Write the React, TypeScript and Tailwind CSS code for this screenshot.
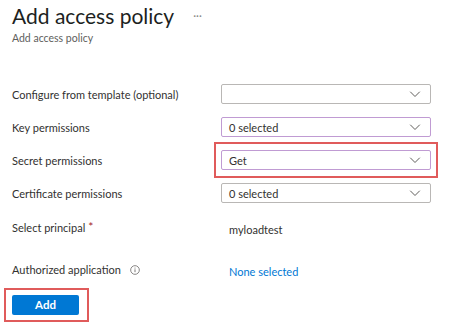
import React from 'react';

const Chevron = () => (
  <svg width="12" height="12" viewBox="0 0 12 12" fill="none" className="shrink-0">
    <path d="M1.5 4l4.5 4.5L10.5 4" stroke="#605e5c" strokeWidth="1" strokeLinecap="round" strokeLinejoin="round" />
  </svg>
);

const Dropdown = ({ value, border }: { value?: string; border: string }) => (
  <div className={`h-[20px] w-[210px] flex items-center justify-between pl-[7px] pr-[9px] border rounded-[2px] bg-white ${border}`}>
    <span className="text-[11px] text-[#323130] leading-none">{value}</span>
    <Chevron />
  </div>
);

const Label = ({ children }: { children: React.ReactNode }) => (
  <div className="text-[11px] text-[#323130] leading-none flex items-center gap-[3px]">{children}</div>
);

export default function App() {
  return (
    <div className="w-[474px] h-[331px] bg-white overflow-hidden pl-[12px] pt-[1px]" style={{ fontFamily: 'Lato, "Open Sans", sans-serif' }}>
      <div className="flex items-center gap-[19px]">
        <h1 className="text-[21px] leading-[30px] text-[#201f1e]">Add access policy</h1>
        <span className="text-[#8a8886] text-[11px] leading-none pb-[2px]">···</span>
      </div>
      <div className="text-[10.5px] text-[#605e5c] leading-[12px] mt-[1px]">Add access policy</div>

      <div className="mt-[40px] flex flex-col gap-[13px]">
        <div className="flex items-center h-[20px]">
          <div className="w-[209px]"><Label>Configure from template (optional)</Label></div>
          <Dropdown border="border-[#b9b7b5]" />
        </div>
        <div className="flex items-center h-[20px]">
          <div className="w-[209px]"><Label>Key permissions</Label></div>
          <Dropdown value="0 selected" border="border-[#c09bd3]" />
        </div>
        <div className="flex items-center h-[20px]">
          <div className="w-[209px]"><Label>Secret permissions</Label></div>
          <div className="ml-[-7px] my-[-8px] px-[5px] py-[6px] border-2 border-[#e05b5b]">
            <Dropdown value="Get" border="border-[#c09bd3]" />
          </div>
        </div>
        <div className="flex items-center h-[20px]">
          <div className="w-[209px]"><Label>Certificate permissions</Label></div>
          <Dropdown value="0 selected" border="border-[#b9b7b5]" />
        </div>
      </div>

      <div className="mt-[16px] flex items-start h-[20px]">
        <div className="w-[217px] pt-[2px]">
          <Label>
            Select principal <span className="text-[#a4262c] text-[12px]">*</span>
          </Label>
        </div>
        <div className="text-[11px] text-[#323130] leading-none pt-[5px]">myloadtest</div>
      </div>

      <div className="mt-[23px] flex items-start h-[20px]">
        <div className="w-[217px] pt-[2px]">
          <Label>
            Authorized application
            <svg width="10" height="10" viewBox="0 0 12 12" className="ml-[6px]">
              <circle cx="6" cy="6" r="5.2" fill="none" stroke="#605e5c" strokeWidth="0.9" />
              <path d="M6 5.2v3.4" stroke="#605e5c" strokeWidth="1" />
              <circle cx="6" cy="3.6" r="0.6" fill="#605e5c" />
            </svg>
          </Label>
        </div>
        <div className="text-[11px] text-[#0078d4] leading-none pt-[4px]">None selected</div>
      </div>

      <div className="mt-[6px] ml-[-8px] w-[85px] h-[34px] border-2 border-[#e05b5b] flex items-center pl-[6px]">
        <button className="w-[67px] h-[20px] bg-[#0078d4] rounded-[2px] text-white text-[11.5px] font-bold leading-none">Add</button>
      </div>
    </div>
  );
}
